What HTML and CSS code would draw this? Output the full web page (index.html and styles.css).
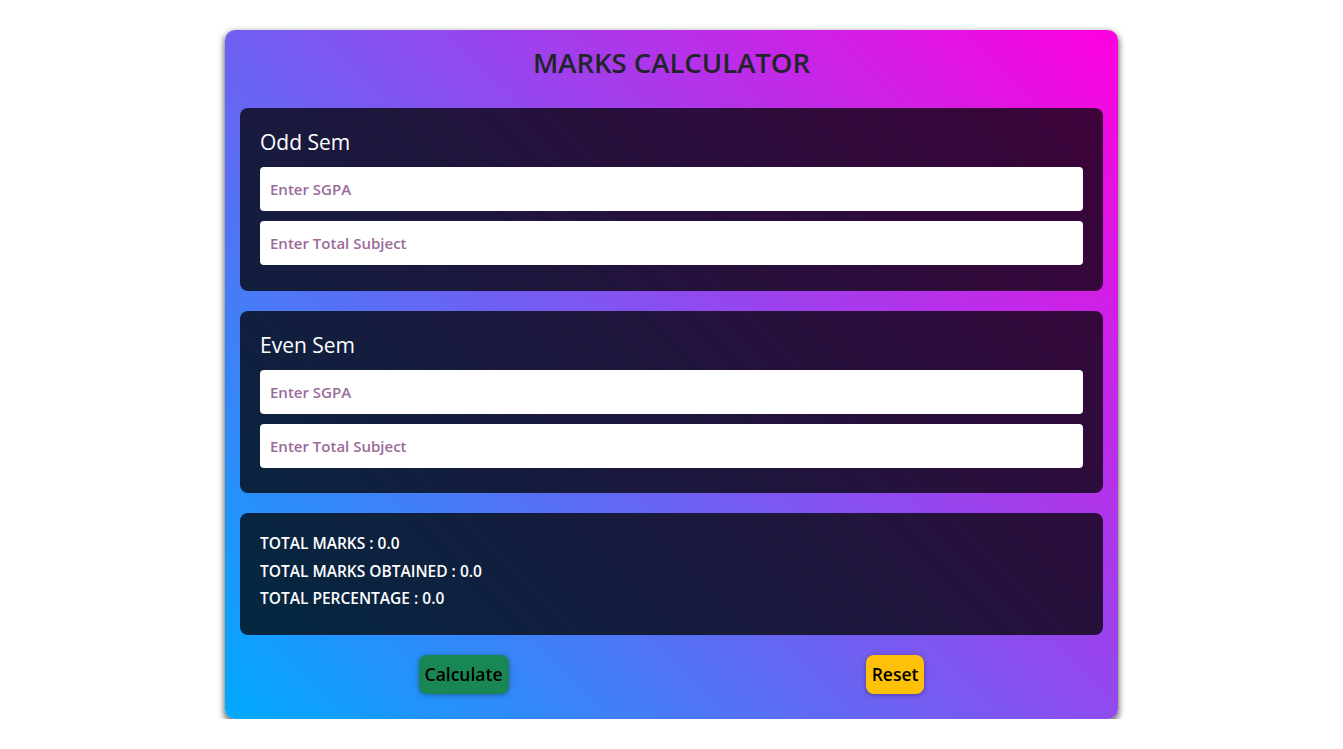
FILE: index.html
```html
<!DOCTYPE html>
<html lang="en">
<head>
<meta charset="utf-8">
<title>Marks Calculator</title>
<link rel="stylesheet" href="styles.css">
</head>
<body>
<main class="card">
  <h1 class="title">MARKS CALCULATOR</h1>
  <section class="panel">
    <h2 class="panel-title">Odd Sem</h2>
    <input class="field" type="text" placeholder="Enter SGPA">
    <input class="field" type="text" placeholder="Enter Total Subject">
  </section>
  <section class="panel">
    <h2 class="panel-title">Even Sem</h2>
    <input class="field" type="text" placeholder="Enter SGPA">
    <input class="field" type="text" placeholder="Enter Total Subject">
  </section>
  <section class="panel results">
    <div class="result-line">TOTAL MARKS : 0.0</div>
    <div class="result-line">TOTAL MARKS OBTAINED : 0.0</div>
    <div class="result-line">TOTAL PERCENTAGE : 0.0</div>
  </section>
  <div class="actions">
    <button class="btn btn-calc" type="button">Calculate</button>
    <button class="btn btn-reset" type="button">Reset</button>
  </div>
</main>
</body>
</html>
```

FILE: styles.css
```css
* { box-sizing: border-box; }

body {
  margin: 0;
  background: #ffffff;
  font-family: "Open Sans", "Noto Sans", sans-serif;
}

.card {
  width: 893px;
  margin: 30px auto 0;
  padding: 13px 15px 25px;
  border-radius: 10px;
  background: linear-gradient(45deg, #00aaff, #ff00e0);
  box-shadow: 0 3px 6px 1px rgba(0, 0, 0, 0.6);
  display: flex;
  flex-direction: column;
  gap: 20px;
}

.title {
  margin: 0 0 5px;
  height: 40px;
  line-height: 40px;
  font-size: 27.5px;
  font-weight: 600;
  color: #212529;
  text-align: center;
}

.panel {
  background: rgba(0, 0, 0, 0.75);
  border-radius: 8px;
  padding: 22px 20px 25.5px;
  display: flex;
  flex-direction: column;
  gap: 10px;
}

.panel-title {
  margin: 0 0 3px;
  font-size: 21px;
  line-height: 24px;
  font-weight: 400;
  color: #ffffff;
}

.field {
  display: block;
  width: 100%;
  height: 44px;
  border: none;
  border-radius: 4px;
  background: #ffffff;
  padding: 0 10px;
  font-family: inherit;
  font-size: 15px;
  font-weight: 600;
  color: #333;
}

.field::placeholder {
  color: #9b6a9b;
  opacity: 1;
}

.results {
  padding: 17px 20px 22px;
  gap: 0;
}

.result-line {
  height: 27.5px;
  line-height: 27.5px;
  font-size: 15.5px;
  font-weight: 600;
  color: #ffffff;
}

.actions {
  display: flex;
  justify-content: space-around;
  align-items: center;
}

.btn {
  height: 39px;
  padding: 0 6px;
  border: none;
  border-radius: 8px;
  font-family: inherit;
  font-size: 17.5px;
  font-weight: 600;
  color: #000000;
  box-shadow: 0 1px 5px rgba(0, 0, 0, 0.35);
  cursor: pointer;
}

.btn-calc { background: #198754; }
.btn-reset { background: #ffc107; }
```
